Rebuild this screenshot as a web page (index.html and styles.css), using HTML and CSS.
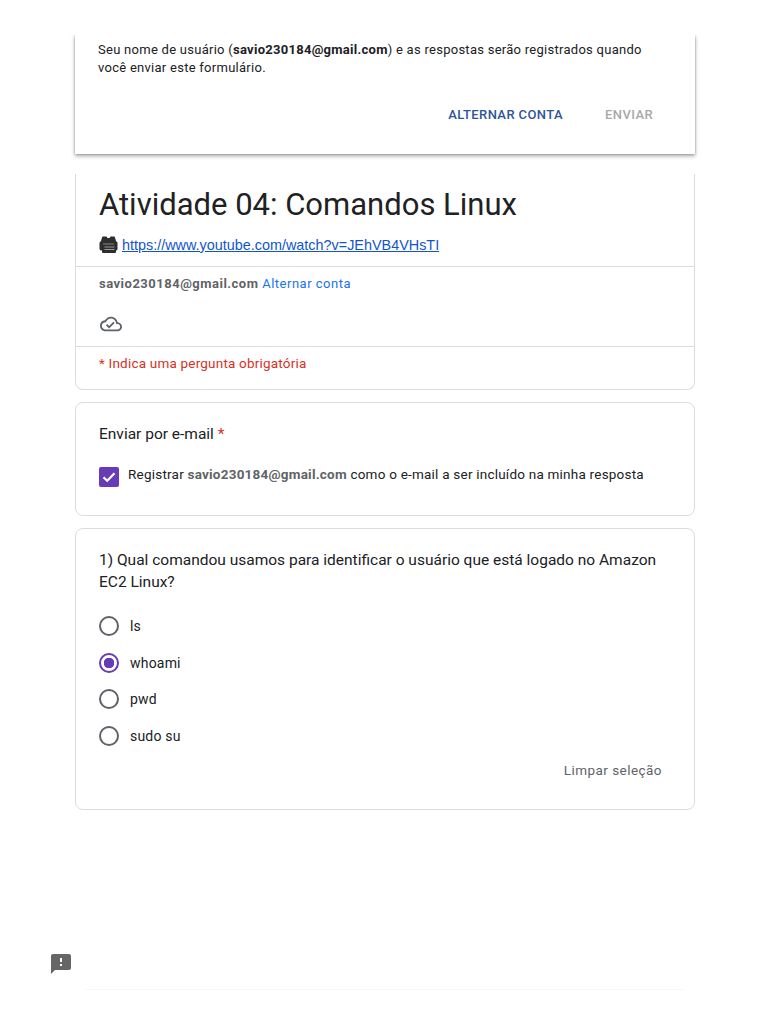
FILE: index.html
```html
<!DOCTYPE html>
<html lang="pt">
<head>
    <meta charset="UTF-8">
    <meta name="viewport" content="width=device-width, initial-scale=1.0">
    <title>Atividade 04: Comandos Linux</title>
    <link rel="stylesheet" href="styles.css">
</head>
<body>
    <div class="container">
        <div class="dialog">
            <p class="dialog-text">Seu nome de usuário (<strong>savio230184@gmail.com</strong>) e as respostas serão registrados quando você enviar este formulário.</p>
            <div class="dialog-actions">
                <span class="btn-switch">ALTERNAR CONTA</span>
                <span class="btn-send">ENVIAR</span>
            </div>
        </div>

        <div class="card header-card">
            <h1>Atividade 04: Comandos Linux</h1>
            <div class="desc">
                <svg class="emoji" width="19" height="18" viewBox="0 0 19 18">
                    <path d="M3 1.500Q3 .5 4 .5h3.500l1 1.500h2l1-1.500H15q1 0 1 1l1 3.500 1.500 1.500v6.500q0 1.500-1.500 1.500v1.500q0 1-1 1H4q-1 0-1-1V14.500q-2.500 0-2.500-1.500V6.500L2 5z" fill="#2e2e2e"/>
                    <path d="M4 8h11" stroke="#6d6d6d" stroke-width="1.400" fill="none"/>
                    <path d="M5.500 11h10M5.500 13.500h10" stroke="#9a9a9a" stroke-width="1.200" fill="none"/>
                </svg>
                <a href="#">https://www.youtube.com/watch?v=JEhVB4VHsTI</a>
            </div>
            <div class="account-row">
                <div class="account-line"><b>savio230184@gmail.com</b> <a href="#">Alternar conta</a></div>
                <svg class="cloud" width="22" height="22" viewBox="0 0 24 24">
                    <path d="M19.350 10.040C18.670 6.590 15.640 4 12 4 9.110 4 6.600 5.640 5.350 8.040 2.340 8.360 0 10.910 0 14c0 3.310 2.690 6 6 6h13c2.760 0 5-2.240 5-5 0-2.640-2.050-4.780-4.650-4.960zM19 18H6c-2.210 0-4-1.790-4-4 0-2.050 1.530-3.760 3.560-3.970l1.070-.11.5-.95C8.080 7.140 9.940 6 12 6c2.620 0 4.880 1.860 5.390 4.430l.3 1.500 1.530.11c1.560.1 2.780 1.410 2.780 2.960 0 1.650-1.350 3-3 3zm-9-3.820l-2.090-2.090L6.500 13.500 10 17l6.010-6.010-1.410-1.410z" fill="#5f6368"/>
                </svg>
            </div>
            <div class="required-note">* Indica uma pergunta obrigatória</div>
        </div>

        <div class="card email-card">
            <div class="question">Enviar por e-mail <span class="star">*</span></div>
            <div class="check-row">
                <span class="checkbox">
                    <svg width="20" height="20" viewBox="0 0 20 20"><path d="M4.500 10.200l3.700 3.600 7.300-7.600" fill="none" stroke="#fff" stroke-width="2.200"/></svg>
                </span>
                <span>Registrar <b>savio230184@gmail.com</b> como o e-mail a ser incluído na minha resposta</span>
            </div>
        </div>

        <div class="card question-card">
            <div class="question">1) Qual comandou usamos para identificar o usuário que está logado no Amazon EC2 Linux?</div>
            <ul class="options">
                <li><span class="radio"></span>ls</li>
                <li><span class="radio checked"></span>whoami</li>
                <li><span class="radio"></span>pwd</li>
                <li><span class="radio"></span>sudo su</li>
            </ul>
            <div class="clear">Limpar seleção</div>
        </div>

        <div class="report">
            <svg width="24" height="24" viewBox="0 0 24 24">
                <path d="M20 2H4c-1.100 0-2 .9-2 2v18l4-4h14c1.100 0 2-.9 2-2V4c0-1.100-.9-2-2-2zm-7 12h-2v-2h2v2zm0-4h-2V6h2v4z" fill="#666"/>
            </svg>
        </div>
        <div class="footer-line"></div>
    </div>
</body>
</html>
```

FILE: styles.css
```css
body {
    font-family: Roboto, Arial, sans-serif;
    margin: 0;
    padding: 0;
    background-color: #fff;
    color: #202124;
}
.container {
    width: 620px;
    margin-left: 75px;
    padding-top: 35px;
}
.dialog {
    height: 119px;
    box-sizing: border-box;
    padding: 6px 23px 0;
    background-color: #fff;
    box-shadow: 0 2px 4px rgba(0, 0, 0, 0.35), 0 0 2px rgba(0, 0, 0, 0.25);
    clip-path: inset(0 -8px -8px -8px);
}
.dialog-text {
    margin: 0;
    font-size: 13px;
    line-height: 18px;
    letter-spacing: 0.27px;
}
.dialog-actions {
    display: flex;
    justify-content: flex-end;
    gap: 42px;
    margin-top: 29px;
    padding-right: 19px;
    font-size: 13px;
    font-weight: 500;
    line-height: 18px;
    letter-spacing: 0.4px;
}
.btn-switch {
    color: #2f5597;
}
.btn-send {
    color: #a8a8a8;
}
.card {
    background-color: #fff;
    border: 1px solid #dadce0;
    border-radius: 8px;
    box-sizing: border-box;
    margin-top: 12px;
}
.header-card {
    margin-top: 20px;
    height: 216px;
    border-top: none;
    border-top-left-radius: 0;
    border-top-right-radius: 0;
}
h1 {
    margin: 0;
    padding: 11px 23px 0;
    font-size: 31px;
    font-weight: 400;
    line-height: 40px;
}
.desc {
    display: flex;
    align-items: center;
    gap: 4px;
    height: 24px;
    padding: 8px 23px 9px;
    border-bottom: 1px solid #dadce0;
}
.desc a {
    font-family: "Liberation Sans", Arial, sans-serif;
    font-size: 14.4px;
    color: #1155cc;
}
.emoji {
    flex: none;
}
.account-row {
    height: 80px;
    box-sizing: border-box;
    padding: 8px 23px 0;
    border-bottom: 1px solid #dadce0;
}
.account-line {
    font-size: 13px;
    line-height: 18px;
    letter-spacing: 0.5px;
}
.account-line b {
    font-weight: 700;
    color: #5f6368;
}
.account-line a {
    color: #1a73e8;
    text-decoration: none;
}
.cloud {
    display: block;
    margin-top: 20px;
    margin-left: 1px;
}
.required-note {
    padding: 7px 23px 0;
    font-size: 13.5px;
    line-height: 18px;
    letter-spacing: 0.2px;
    color: #d93025;
}
.email-card {
    height: 114px;
    padding: 20px 23px 0;
}
.question {
    font-size: 15.5px;
    line-height: 22px;
}
.star {
    color: #d93025;
}
.check-row {
    display: flex;
    align-items: flex-start;
    gap: 9px;
    margin-top: 19px;
    font-size: 13.5px;
    letter-spacing: 0.22px;
    line-height: 20px;
}
.check-row b {
    font-weight: 700;
    color: #5f6368;
}
.checkbox {
    width: 20px;
    height: 20px;
    flex: none;
    margin-top: 3px;
    border-radius: 2px;
    background-color: #673ab7;
}
.checkbox svg {
    display: block;
}
.question-card {
    height: 282px;
    padding: 20px 23px 0;
}
.options {
    list-style: none;
    margin: 15px 0 0;
    padding: 0;
}
.options li {
    display: flex;
    align-items: center;
    gap: 11px;
    height: 36.5px;
    font-size: 14px;
    letter-spacing: 0.2px;
}
.radio {
    width: 20px;
    height: 20px;
    flex: none;
    box-sizing: border-box;
    border: 2px solid #5f6368;
    border-radius: 50%;
}
.radio.checked {
    border-color: #673ab7;
    background: radial-gradient(circle, #673ab7 0 5px, transparent 5.500px);
}
.clear {
    margin-top: 7px;
    padding-right: 9px;
    text-align: right;
    font-size: 13.5px;
    letter-spacing: 0.45px;
    line-height: 18px;
    color: #5f6368;
}
.report {
    width: 24px;
    height: 24px;
    margin: 142px 0 0 -26px;
}
.report svg {
    display: block;
}
.footer-line {
    width: 600px;
    height: 1px;
    margin: 13px 0 0 10px;
    background-color: #f7f7f7;
}
```
